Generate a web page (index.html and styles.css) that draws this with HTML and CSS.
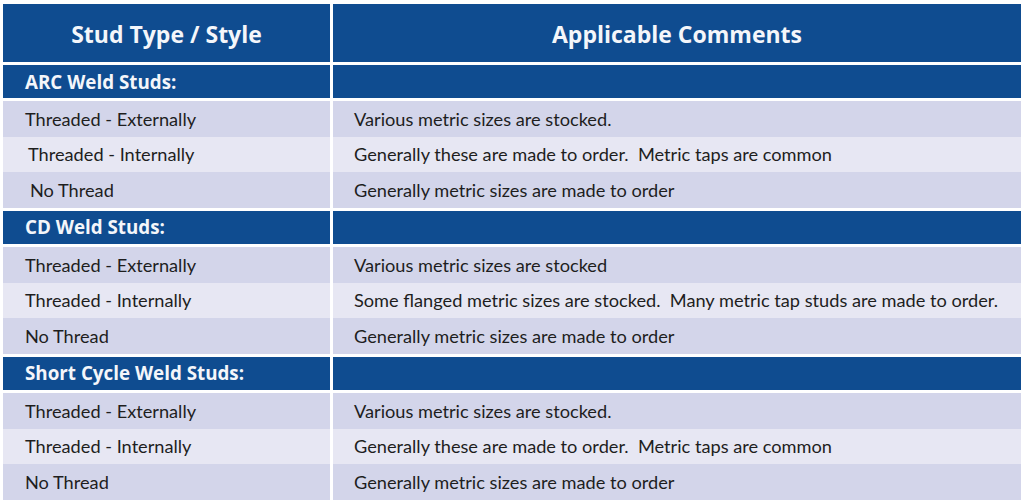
FILE: index.html
```html
<!DOCTYPE html>
<html>
<head>
<meta charset="utf-8">
<link rel="stylesheet" href="styles.css">
</head>
<body>
<div class="table">
  <div class="row head">
    <div class="cell">Stud Type / Style</div>
    <div class="cell">Applicable Comments</div>
  </div>

  <div class="row section">
    <div class="cell">ARC Weld Studs:</div>
    <div class="cell"></div>
  </div>
  <div class="group">
    <div class="row data dark">
      <div class="cell">Threaded - Externally</div>
      <div class="cell">Various metric sizes are stocked.</div>
    </div>
    <div class="row data light">
      <div class="cell ind1">Threaded - Internally</div>
      <div class="cell">Generally these are made to order.&nbsp; Metric taps are common</div>
    </div>
    <div class="row data dark">
      <div class="cell ind2">No Thread</div>
      <div class="cell">Generally metric sizes are made to order</div>
    </div>
  </div>

  <div class="row section">
    <div class="cell">CD Weld Studs:</div>
    <div class="cell"></div>
  </div>
  <div class="group">
    <div class="row data dark">
      <div class="cell">Threaded - Externally</div>
      <div class="cell">Various metric sizes are stocked</div>
    </div>
    <div class="row data light">
      <div class="cell">Threaded - Internally</div>
      <div class="cell">Some flanged metric sizes are stocked.&nbsp; Many metric tap studs are made to order.</div>
    </div>
    <div class="row data dark">
      <div class="cell">No Thread</div>
      <div class="cell">Generally metric sizes are made to order</div>
    </div>
  </div>

  <div class="row section">
    <div class="cell">Short Cycle Weld Studs:</div>
    <div class="cell"></div>
  </div>
  <div class="group">
    <div class="row data dark">
      <div class="cell">Threaded - Externally</div>
      <div class="cell">Various metric sizes are stocked.</div>
    </div>
    <div class="row data light">
      <div class="cell">Threaded - Internally</div>
      <div class="cell">Generally these are made to order.&nbsp; Metric taps are common</div>
    </div>
    <div class="row data dark">
      <div class="cell">No Thread</div>
      <div class="cell">Generally metric sizes are made to order</div>
    </div>
  </div>
</div>
</body>
</html>
```

FILE: styles.css
```css
html, body {
  margin: 0;
  padding: 0;
  background: #ffffff;
}
body {
  padding: 4px 0 0 3px;
}
.table {
  width: 1018px;
  display: flex;
  flex-direction: column;
}
.row {
  display: grid;
  grid-template-columns: 327px 688px;
  column-gap: 3px;
}
.cell {
  display: flex;
  align-items: center;
  white-space: nowrap;
}
.head {
  height: 58px;
  margin-bottom: 3px;
}
.head .cell {
  background: #0f4c90;
  color: #f4f6fa;
  justify-content: center;
  font-family: "Open Sans", "Noto Sans", sans-serif;
  font-weight: 700;
  font-size: 23px;
  padding-top: 1px;
}
.section {
  height: 33px;
  margin-bottom: 3px;
}
.section .cell {
  background: #0f4c90;
  color: #f4f6fa;
  font-family: "Open Sans", "Noto Sans", sans-serif;
  font-weight: 700;
  font-size: 18.8px;
  padding-left: 22px;
}
.group {
  display: flex;
  flex-direction: column;
  margin-bottom: 3px;
}
.data {
  height: 35.67px;
}
.data .cell {
  font-family: Lato, "Noto Sans", sans-serif;
  font-size: 18.2px;
  color: #1e1e1e;
  padding-left: 22px;
}
.data .cell:nth-child(2) {
  padding-left: 21px;
}
.data .cell.ind1 { padding-left: 25px; }
.data .cell.ind2 { padding-left: 27px; }
.dark .cell { background: #d3d5ea; }
.light .cell { background: #e7e7f3; }
```
